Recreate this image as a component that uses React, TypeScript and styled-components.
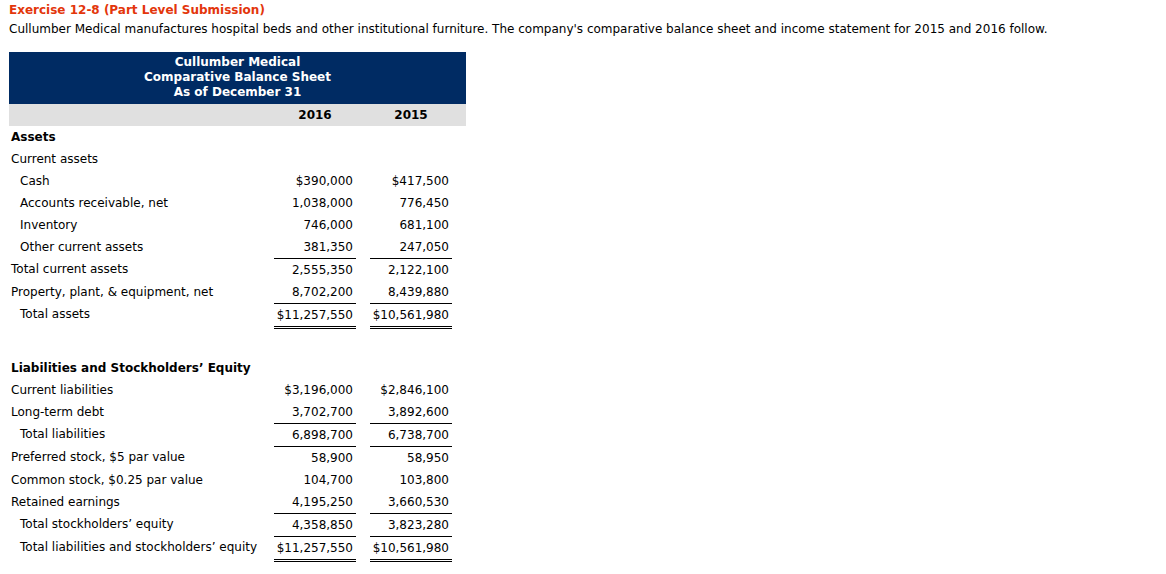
import React from 'react';
import styled, { createGlobalStyle } from 'styled-components';

const GlobalStyle = createGlobalStyle`
    body {
        margin: 0;
        background: #fff;
        color: #000;
        font-family: "DejaVu Sans", Verdana, sans-serif;
        font-size: 12px;
    }
`;

const Page = styled.div`
    padding: 2px 9px;
`;

const Title = styled.div`
    color: #e3360b;
    font-weight: bold;
    line-height: 16px;
`;

const Intro = styled.div`
    margin-top: 3px;
    line-height: 16px;
`;

const Sheet = styled.div`
    width: 457px;
    margin-top: 15px;
`;

const SheetHead = styled.div`
    background: #002b63;
    color: #fff;
    font-weight: bold;
    text-align: center;
    line-height: 15px;
    padding: 3px 0 4px;
`;

// label | 2016 | 2015, with the gaps between the figure columns
const Row = styled.div`
    display: grid;
    grid-template-columns: 251px 82px 82px;
    column-gap: 14px;
    line-height: 22px;
`;

const YearRow = styled(Row)`
    background: #e0e0e0;
    font-weight: bold;
    height: 22px;
`;

const Year = styled.div`
    text-align: center;
`;

const Label = styled.div<{ $indent?: boolean; $bold?: boolean }>`
    padding-left: ${p => (p.$indent ? 11 : 2)}px;
    font-weight: ${p => (p.$bold ? 'bold' : 'normal')};
    white-space: nowrap;
`;

const Amount = styled.div<{ $rule?: boolean; $double?: boolean }>`
    text-align: right;
    padding-right: 3px;
    border-top: ${p => (p.$rule ? '1px solid #000' : 'none')};
    border-bottom: ${p => (p.$double ? '3px double #000' : 'none')};
`;

const Gap = styled.div`
    height: 28px;
`;

interface ILine {
    label: string;
    a?: string;
    b?: string;
    indent?: boolean;
    bold?: boolean;
    rule?: boolean;
    double?: boolean;
}

const assets: ILine[] = [
    { label: 'Assets', bold: true },
    { label: 'Current assets' },
    { label: 'Cash', a: '$390,000', b: '$417,500', indent: true },
    { label: 'Accounts receivable, net', a: '1,038,000', b: '776,450', indent: true },
    { label: 'Inventory', a: '746,000', b: '681,100', indent: true },
    { label: 'Other current assets', a: '381,350', b: '247,050', indent: true },
    { label: 'Total current assets', a: '2,555,350', b: '2,122,100', rule: true },
    { label: 'Property, plant, & equipment, net', a: '8,702,200', b: '8,439,880' },
    { label: 'Total assets', a: '$11,257,550', b: '$10,561,980', indent: true, rule: true, double: true },
];

const liabilities: ILine[] = [
    { label: 'Liabilities and Stockholders\u2019 Equity', bold: true },
    { label: 'Current liabilities', a: '$3,196,000', b: '$2,846,100' },
    { label: 'Long-term debt', a: '3,702,700', b: '3,892,600' },
    { label: 'Total liabilities', a: '6,898,700', b: '6,738,700', indent: true, rule: true },
    { label: 'Preferred stock, $5 par value', a: '58,900', b: '58,950', rule: true },
    { label: 'Common stock, $0.25 par value', a: '104,700', b: '103,800' },
    { label: 'Retained earnings', a: '4,195,250', b: '3,660,530' },
    { label: 'Total stockholders\u2019 equity', a: '4,358,850', b: '3,823,280', indent: true, rule: true },
    { label: 'Total liabilities and stockholders\u2019 equity', a: '$11,257,550', b: '$10,561,980', indent: true, rule: true, double: true },
];

const renderLines = (lines: ILine[]) =>
    lines.map(l => (
        <Row key={l.label}>
            <Label $indent={l.indent} $bold={l.bold}>{l.label}</Label>
            {l.a !== undefined ? <Amount $rule={l.rule} $double={l.double}>{l.a}</Amount> : <div />}
            {l.b !== undefined ? <Amount $rule={l.rule} $double={l.double}>{l.b}</Amount> : <div />}
        </Row>
    ));

export default function App() {
    return (
        <Page>
            <GlobalStyle />
            <Title>Exercise 12-8 (Part Level Submission)</Title>
            <Intro>
                Cullumber Medical manufactures hospital beds and other institutional furniture. The company's comparative balance sheet and income statement for 2015 and 2016 follow.
            </Intro>
            <Sheet>
                <SheetHead>
                    Cullumber Medical<br />
                    Comparative Balance Sheet<br />
                    As of December 31
                </SheetHead>
                <YearRow>
                    <div />
                    <Year>2016</Year>
                    <Year>2015</Year>
                </YearRow>
                {renderLines(assets)}
                <Gap />
                {renderLines(liabilities)}
            </Sheet>
        </Page>
    );
}
